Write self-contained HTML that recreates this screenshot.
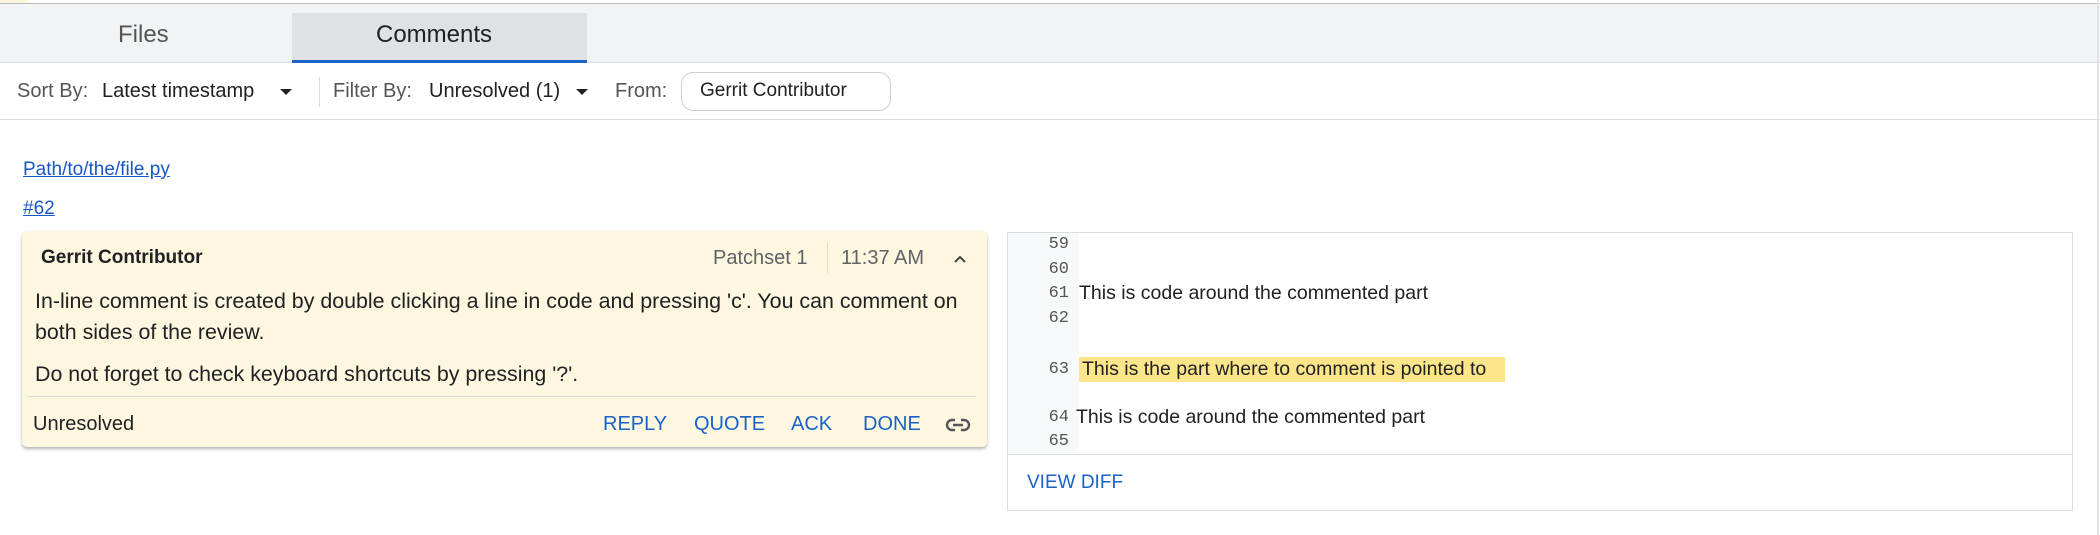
<!DOCTYPE html>
<html><head><meta charset="utf-8"><style>
*{box-sizing:border-box;margin:0;padding:0}
body{width:2100px;height:535px;position:relative;background:#fff;font-family:"Liberation Sans",sans-serif;color:#202124;overflow:hidden}
.a{position:absolute;white-space:nowrap}
.tabs{position:absolute;left:0;top:3px;width:2100px;height:60px;background:#f1f3f4;border-top:1px solid #bbb;border-bottom:1px solid #dadce0}
.lnk{color:#1a56c4;text-decoration:underline}
.blue{color:#1a62c8}
.gray{color:#5f6368}
.ln{font-family:"Liberation Mono",monospace;font-size:17px;color:#555;width:62px;text-align:right;left:1007px}
.code{left:1079px;font-size:19.5px}
</style></head><body>
<div class="a" style="left:0;top:0;width:28px;height:30px;background:#fdf6dc;border-bottom:1px solid #f0e0a0"></div>
<div class="tabs"></div>
<div class="a" style="left:292px;top:13px;width:295px;height:50px;background:#dfe1e5;border-bottom:3px solid #1a62c8"></div>
<div class="a gray" style="left:118px;top:21px;font-size:24px;color:#555">Files</div>
<div class="a" style="left:376px;top:21px;font-size:24px">Comments</div>

<div class="a" style="left:0;top:119px;width:2100px;height:1px;background:#dadce0"></div>
<div class="a gray" style="left:17px;top:80px;font-size:20px;color:#555">Sort By:</div>
<div class="a" style="left:102px;top:80px;font-size:20px">Latest timestamp</div>
<div class="a" style="left:280px;top:89px;width:0;height:0;border-left:6px solid transparent;border-right:6px solid transparent;border-top:6px solid #202124"></div>
<div class="a" style="left:319px;top:77px;width:1px;height:30px;background:#dadce0"></div>
<div class="a" style="left:333px;top:80px;font-size:20px;color:#555">Filter By:</div>
<div class="a" style="left:429px;top:80px;font-size:20px">Unresolved (1)</div>
<div class="a" style="left:576px;top:89px;width:0;height:0;border-left:6px solid transparent;border-right:6px solid transparent;border-top:6px solid #202124"></div>
<div class="a" style="left:615px;top:80px;font-size:20px;color:#555">From:</div>
<div class="a" style="left:681px;top:72px;width:210px;height:39px;border:1px solid #ccc;border-radius:12px"></div>
<div class="a" style="left:700px;top:80px;font-size:19px">Gerrit Contributor</div>

<div class="a lnk" style="left:23px;top:159px;font-size:19px">Path/to/the/file.py</div>
<div class="a lnk" style="left:23px;top:198px;font-size:19px">#62</div>

<div class="a" style="left:22px;top:231px;width:965px;height:216px;background:#fef7e0;border-radius:5px;box-shadow:0 2px 3px rgba(0,0,0,.3)"></div>
<div class="a" style="left:41px;top:247px;font-size:19px;font-weight:bold">Gerrit Contributor</div>
<div class="a" style="left:713px;top:247px;font-size:20px;color:#5f6368">Patchset 1</div>
<div class="a" style="left:827px;top:243px;width:1px;height:30px;background:#e5dcc0"></div>
<div class="a" style="left:841px;top:247px;font-size:20px;color:#5f6368">11:37 AM</div>
<svg class="a" style="left:951px;top:250px" width="18" height="18" viewBox="0 0 18 18"><path d="M4 12 L9 7 L14 12" fill="none" stroke="#444" stroke-width="2"/></svg>
<div class="a" style="left:35px;top:289px;font-size:21.4px">In-line comment is created by double clicking a line in code and pressing 'c'. You can comment on</div>
<div class="a" style="left:35px;top:320px;font-size:21.4px">both sides of the review.</div>
<div class="a" style="left:35px;top:362px;font-size:21.4px">Do not forget to check keyboard shortcuts by pressing '?'.</div>
<div class="a" style="left:28px;top:396px;width:948px;height:1px;background:#d8d8d8"></div>
<div class="a" style="left:33px;top:413px;font-size:20px">Unresolved</div>
<div class="a blue" style="left:603px;top:413px;font-size:20px">REPLY</div>
<div class="a blue" style="left:694px;top:413px;font-size:20px">QUOTE</div>
<div class="a blue" style="left:791px;top:413px;font-size:20px">ACK</div>
<div class="a blue" style="left:863px;top:413px;font-size:20px">DONE</div>
<svg class="a" style="left:945px;top:415px" width="26" height="20" viewBox="0 0 26 20"><path d="M10 5 H7 a5 5 0 0 0 0 10 H10 M16 5 H19 a5 5 0 0 1 0 10 H16 M8 10 H18" fill="none" stroke="#555" stroke-width="2.4"/></svg>

<div class="a" style="left:1007px;top:232px;width:1066px;height:279px;border:1px solid #dadce0"></div>
<div class="a" style="left:1008px;top:233px;width:71px;height:220px;background:#f8f9fa"></div>
<div class="a" style="left:1008px;top:454px;width:1064px;height:1px;background:#dadce0"></div>
<div class="a ln" style="top:235px">59</div>
<div class="a ln" style="top:260px">60</div>
<div class="a ln" style="top:284px">61</div>
<div class="a ln" style="top:309px">62</div>
<div class="a ln" style="top:360px">63</div>
<div class="a ln" style="top:408px">64</div>
<div class="a ln" style="top:432px">65</div>
<div class="a code" style="top:282px">This is code around the commented part</div>
<div class="a" style="left:1079px;top:357px;width:426px;height:25px;background:#fde68a"></div>
<div class="a code" style="left:1082px;top:358px">This is the part where to comment is pointed to</div>
<div class="a code" style="left:1076px;top:406px">This is code around the commented part</div>
<div class="a blue" style="left:1027px;top:472px;font-size:19px">VIEW DIFF</div>
<div class="a" style="left:2097px;top:0;width:2px;height:535px;background:#e3e3e3"></div>
</body></html>
